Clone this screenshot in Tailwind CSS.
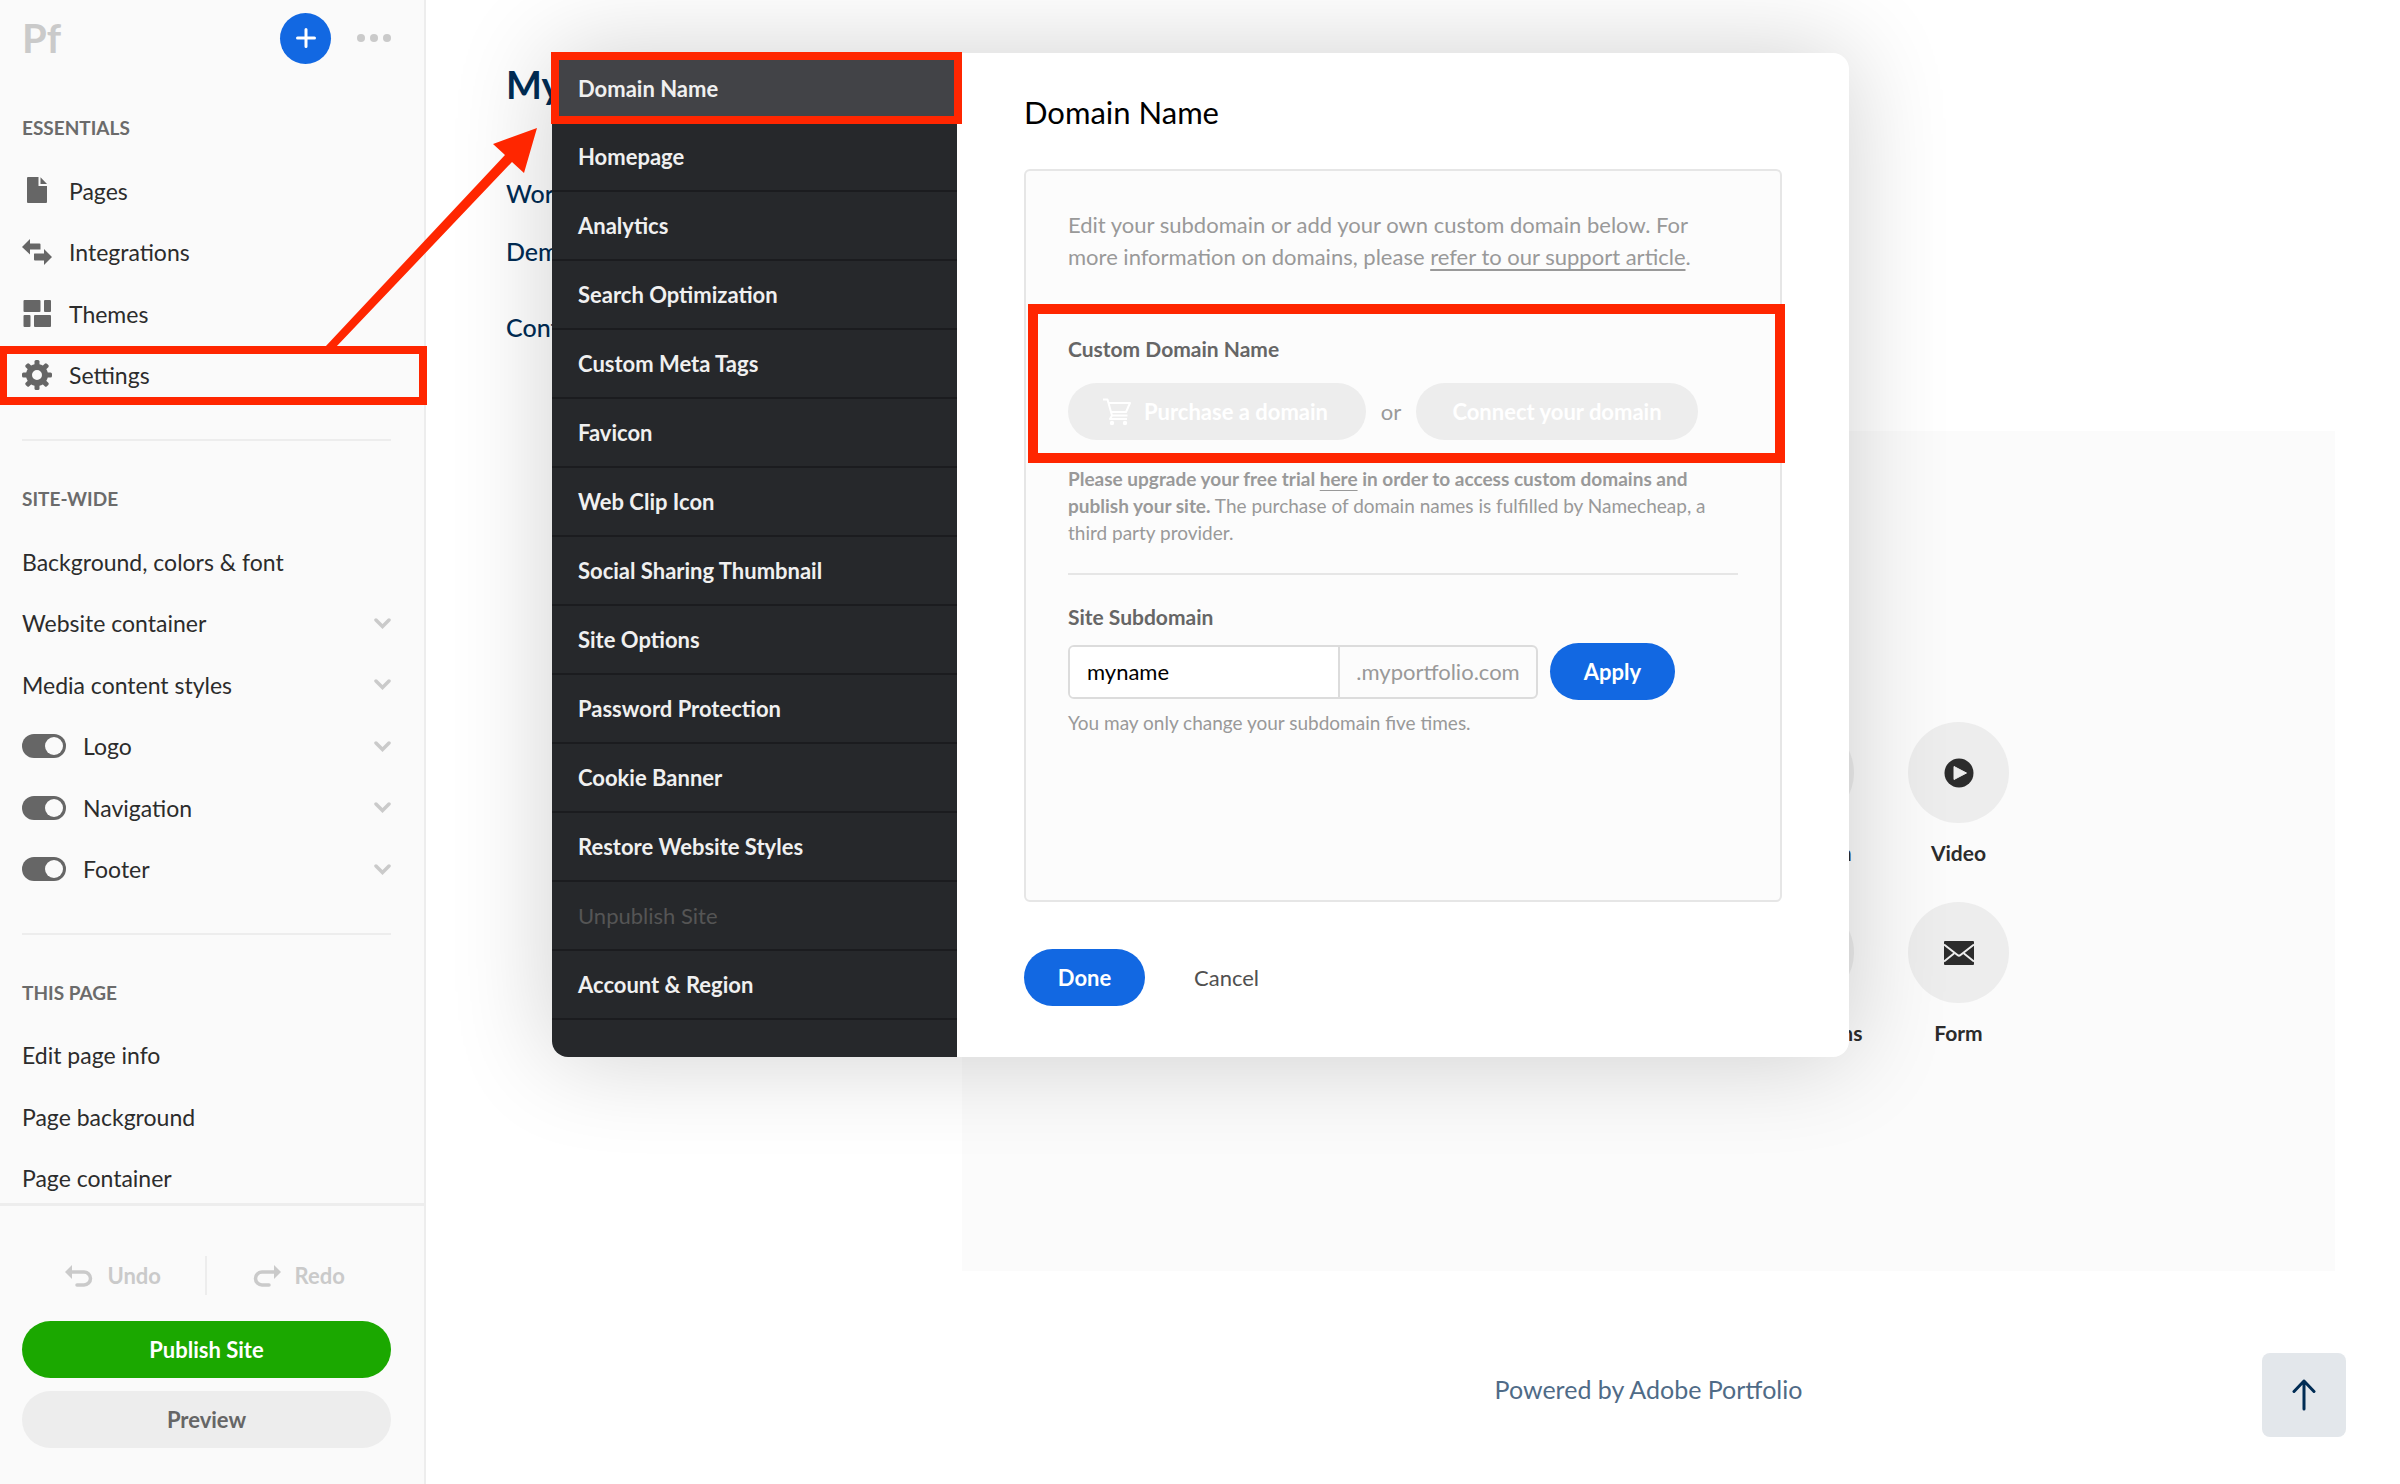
<!DOCTYPE html>
<html lang="en">
<head>
    <meta charset="UTF-8" />
    <meta name="viewport" content="width=device-width, initial-scale=1.0" />
    <script src="https://cdn.jsdelivr.net/npm/@tailwindcss/browser@4"></script>
    <title>Portfolio Settings</title>
</head>
<body class="relative flex h-screen overflow-hidden bg-white font-['Lato','Noto_Sans',sans-serif] text-[23px] text-[#2c2c2c]">

    <!-- Sidebar -->
    <aside class="flex w-[426px] shrink-0 flex-col border-r-2 border-[#ededed] bg-[#fafafa]">
        <div class="min-h-0 flex-1 overflow-hidden pl-[22px] pr-[33px]">
            <header class="flex h-[70px] items-center pt-[6px]">
                <span class="text-[40px] font-bold leading-none text-[#cacaca]">Pf</span>
                <button aria-label="Add" class="ml-auto flex size-[51px] items-center justify-center rounded-full bg-[#1268e2]">
                    <svg class="size-5" viewBox="0 0 20 20" fill="none" stroke="#fff" stroke-width="3" stroke-linecap="round"><path d="M10 1.500v17M1.500 10h17" /></svg>
                </button>
                <button aria-label="More" class="ml-[26px]">
                    <svg class="h-2 w-[34px]" viewBox="0 0 34 8" fill="#cacaca"><circle cx="4" cy="4" r="4" /><circle cx="17" cy="4" r="4" /><circle cx="30" cy="4" r="4" /></svg>
                </button>
            </header>

            <section class="border-b-2 border-[#ededed] pb-[33px] pt-[42px]">
                <h2 class="mb-4 text-[19px] font-bold leading-8 text-[#6b6b6b]">ESSENTIALS</h2>
                <nav class="grid h-[246px] grid-rows-4">
                    <a href="#" class="flex items-center gap-[17px]">
                        <svg class="size-[30px]" viewBox="0 0 30 30" fill="#666"><path d="M6 1h10.500v9H25v16a1 1 0 0 1-1 1H6a1 1 0 0 1-1-1V2a1 1 0 0 1 1-1zM18.500 1.200l6.500 6.800h-6.500z" /></svg>
                        Pages
                    </a>
                    <a href="#" class="flex items-center gap-[17px]">
                        <svg class="size-[30px]" viewBox="0 0 30 30" fill="#666"><path d="M0 10l8-8v4.500h9.500a1 1 0 0 1 1 1v5h-10.500v5zM30 20l-8-8v4.500h-9.500a.5.5 0 0 0-.5.5v5.500a1 1 0 0 0 1 1h9v4.500z" /></svg>
                        Integrations
                    </a>
                    <a href="#" class="flex items-center gap-[17px]">
                        <svg class="size-[30px]" viewBox="0 0 30 30" fill="#666"><rect x="1.500" y="1" width="17" height="12" rx="1" /><rect x="22" y="1" width="7" height="12" rx="1" /><rect x="1.500" y="16" width="7" height="12" rx="1" /><rect x="12" y="16" width="17" height="12" rx="1" /></svg>
                        Themes
                    </a>
                    <a href="#" class="flex items-center gap-[17px]">
                        <svg class="size-[30px]" viewBox="0 0 30 30" fill="#666">
                            <path fill-rule="evenodd" d="M15 4a11 11 0 1 0 0 22a11 11 0 0 0 0-22zM15 10a5 5 0 1 1 0 10a5 5 0 0 1 0-10z" />
                            <g id="tooth"><rect x="12.500" y="0" width="5" height="6" rx="1.500" /><rect x="12.500" y="24" width="5" height="6" rx="1.500" /></g>
                            <use href="#tooth" transform="rotate(45 15 15)" /><use href="#tooth" transform="rotate(90 15 15)" /><use href="#tooth" transform="rotate(135 15 15)" />
                        </svg>
                        Settings
                    </a>
                </nav>
            </section>

            <section class="border-b-2 border-[#ededed] pb-[33px] pt-[42px]">
                <h2 class="mb-4 text-[19px] font-bold leading-8 text-[#6b6b6b]">SITE-WIDE</h2>
                <div class="grid h-[369px] grid-rows-6">
                    <a href="#" class="flex items-center">Background, colors &amp; font</a>
                    <a href="#" class="flex items-center justify-between">Website container
                        <svg class="h-[11px] w-[17px]" viewBox="0 0 17 11" fill="none" stroke="#cacaca" stroke-width="3.500" stroke-linecap="round"><path d="M2 2l6.500 6.500L15 2" /></svg>
                    </a>
                    <a href="#" class="flex items-center justify-between">Media content styles
                        <svg class="h-[11px] w-[17px]" viewBox="0 0 17 11" fill="none" stroke="#cacaca" stroke-width="3.500" stroke-linecap="round"><path d="M2 2l6.500 6.500L15 2" /></svg>
                    </a>
                    <div class="flex items-center justify-between">
                        <label class="flex items-center gap-[17px]">
                            <input type="checkbox" checked class="flex h-6 w-11 appearance-none items-center justify-end rounded-full bg-[#666] px-[3px] before:size-[18px] before:rounded-full before:bg-[#fafafa]" />Logo
                        </label>
                        <svg class="h-[11px] w-[17px]" viewBox="0 0 17 11" fill="none" stroke="#cacaca" stroke-width="3.500" stroke-linecap="round"><path d="M2 2l6.500 6.500L15 2" /></svg>
                    </div>
                    <div class="flex items-center justify-between">
                        <label class="flex items-center gap-[17px]">
                            <input type="checkbox" checked class="flex h-6 w-11 appearance-none items-center justify-end rounded-full bg-[#666] px-[3px] before:size-[18px] before:rounded-full before:bg-[#fafafa]" />Navigation
                        </label>
                        <svg class="h-[11px] w-[17px]" viewBox="0 0 17 11" fill="none" stroke="#cacaca" stroke-width="3.500" stroke-linecap="round"><path d="M2 2l6.500 6.500L15 2" /></svg>
                    </div>
                    <div class="flex items-center justify-between">
                        <label class="flex items-center gap-[17px]">
                            <input type="checkbox" checked class="flex h-6 w-11 appearance-none items-center justify-end rounded-full bg-[#666] px-[3px] before:size-[18px] before:rounded-full before:bg-[#fafafa]" />Footer
                        </label>
                        <svg class="h-[11px] w-[17px]" viewBox="0 0 17 11" fill="none" stroke="#cacaca" stroke-width="3.500" stroke-linecap="round"><path d="M2 2l6.500 6.500L15 2" /></svg>
                    </div>
                </div>
            </section>

            <section class="pt-[42px]">
                <h2 class="mb-4 text-[19px] font-bold leading-8 text-[#6b6b6b]">THIS PAGE</h2>
                <nav class="grid h-[184px] grid-rows-3">
                    <a href="#" class="flex items-center">Edit page info</a>
                    <a href="#" class="flex items-center">Page background</a>
                    <a href="#" class="flex items-center">Page container</a>
                </nav>
            </section>
        </div>

        <footer class="shrink-0 border-t-3 border-[#ededed] pb-9 pl-[22px] pr-[33px] pt-[50px] text-[22px] font-bold">
            <div class="mb-[26px] grid h-[39px] grid-cols-2 text-[#cacaca]">
                <button disabled class="flex items-center justify-center gap-[14px] border-r-2 border-[#ededed]">
                    <svg class="h-[22px] w-7" viewBox="0 0 28 22" fill="none" stroke="#cacaca" stroke-width="3.500"><path d="M6 7h13a6.500 6.500 0 0 1 0 13h-7" stroke-linecap="round" /><path d="M0 7l7-7v14z" fill="#cacaca" stroke="none" /></svg>
                    Undo
                </button>
                <button disabled class="flex items-center justify-center gap-[14px]">
                    <svg class="h-[22px] w-7" viewBox="0 0 28 22" fill="none" stroke="#cacaca" stroke-width="3.500"><path d="M22 7H9a6.500 6.500 0 0 0 0 13h7" stroke-linecap="round" /><path d="M28 7l-7-7v14z" fill="#cacaca" stroke="none" /></svg>
                    Redo
                </button>
            </div>
            <button class="mb-[13px] h-[57px] w-full rounded-full bg-[#1ba800] text-white">Publish Site</button>
            <button class="h-[57px] w-full rounded-full bg-[#ededed] text-[#666]">Preview</button>
        </footer>
    </aside>

    <!-- Site being edited -->
    <main class="relative flex flex-1 flex-col overflow-hidden">
        <div class="flex flex-1">
            <div class="w-[536px] shrink-0 pl-20 pt-[60px] text-[#002c54]">
                <h1 class="text-[38px] font-bold leading-[48px]">My</h1>
                <nav class="flex flex-col pt-[66px] text-[25px] font-medium leading-[38px]">
                    <a href="#">Work</a>
                    <a href="#" class="mt-5">Demo</a>
                    <a href="#" class="mt-[38px]">Contact</a>
                </nav>
            </div>
            <div class="mr-[65px] mt-[431px] h-[840px] flex-1 bg-[#fbfbfb] pt-[291px]">
                <div class="mx-auto grid w-[775px] grid-cols-5 gap-y-[35px] text-center text-[21px] font-bold leading-7">
                    <div class="col-start-4 flex flex-col items-center gap-4"><span class="size-[101px] rounded-full bg-[#ededed]"></span>Lightroom</div>
                    <div class="flex flex-col items-center gap-4">
                        <span class="flex size-[101px] items-center justify-center rounded-full bg-[#ededed]">
                            <svg class="size-[30px]" viewBox="0 0 30 30"><circle cx="15" cy="15" r="14.500" fill="#2c2c2c" /><path d="M10 8.500v13L22.500 15z" fill="#ededed" stroke="#ededed" stroke-linejoin="round" /></svg>
                        </span>
                        Video
                    </div>
                    <div class="col-start-4 flex flex-col items-center gap-4"><span class="size-[101px] rounded-full bg-[#ededed]"></span>Link Buttons</div>
                    <div class="flex flex-col items-center gap-4">
                        <span class="flex size-[101px] items-center justify-center rounded-full bg-[#ededed]">
                            <svg class="h-6 w-[30px]" viewBox="0 0 30 24"><rect width="30" height="24" rx="1" fill="#2c2c2c" /><path d="M0 3.500l13.500 10.500q1.500 1.200 3 0L30 3.500M0 20.500l10-8M30 20.500l-10-8" fill="none" stroke="#ededed" stroke-width="2" /></svg>
                        </span>
                        Form
                    </div>
                </div>
            </div>
        </div>
        <footer class="ml-[536px] mr-[65px] flex h-[213px] shrink-0 justify-center pt-[102px] text-[25px] leading-8 text-[#4f6b87]">
            <a href="#" class="h-8">Powered by Adobe Portfolio</a>
        </footer>
        <button aria-label="Back to top" class="absolute bottom-[47px] right-[54px] flex size-[84px] items-center justify-center rounded-lg bg-[#e3e7eb]">
            <svg class="h-8 w-6" viewBox="0 0 24 32" fill="none" stroke="#002c54" stroke-width="3" stroke-linecap="round" stroke-linejoin="round"><path d="M12 30V2M2 12.500L12 2l10 10.500" /></svg>
        </button>

        <!-- Settings dialog -->
        <div role="dialog" aria-labelledby="dialog-title" class="absolute left-[126px] top-[53px] flex w-[1297px] rounded-2xl bg-white shadow-[0_0_100px_rgba(0,0,0,0.19)]">
            <nav class="flex w-[405px] flex-col rounded-l-2xl bg-[#26282b] pb-[37px] text-[22px] font-bold text-[#f0f0f0]">
                <a href="#" class="relative flex h-[70px] items-center rounded-tl-2xl bg-[#424347] px-[26px]">
                    <span class="absolute -inset-y-px -left-px -right-[5px] border-8 border-[#ff2600]"></span>
                    Domain Name
                </a>
                <a href="#" class="flex h-[69px] items-center border-b-2 border-[#1b1c1f] px-[26px]">Homepage</a>
                <a href="#" class="flex h-[69px] items-center border-b-2 border-[#1b1c1f] px-[26px]">Analytics</a>
                <a href="#" class="flex h-[69px] items-center border-b-2 border-[#1b1c1f] px-[26px]">Search Optimization</a>
                <a href="#" class="flex h-[69px] items-center border-b-2 border-[#1b1c1f] px-[26px]">Custom Meta Tags</a>
                <a href="#" class="flex h-[69px] items-center border-b-2 border-[#1b1c1f] px-[26px]">Favicon</a>
                <a href="#" class="flex h-[69px] items-center border-b-2 border-[#1b1c1f] px-[26px]">Web Clip Icon</a>
                <a href="#" class="flex h-[69px] items-center border-b-2 border-[#1b1c1f] px-[26px]">Social Sharing Thumbnail</a>
                <a href="#" class="flex h-[69px] items-center border-b-2 border-[#1b1c1f] px-[26px]">Site Options</a>
                <a href="#" class="flex h-[69px] items-center border-b-2 border-[#1b1c1f] px-[26px]">Password Protection</a>
                <a href="#" class="flex h-[69px] items-center border-b-2 border-[#1b1c1f] px-[26px]">Cookie Banner</a>
                <a href="#" class="flex h-[69px] items-center border-b-2 border-[#1b1c1f] px-[26px]">Restore Website Styles</a>
                <a href="#" class="flex h-[69px] items-center border-b-2 border-[#1b1c1f] px-[26px] font-normal text-[#555]">Unpublish Site</a>
                <a href="#" class="flex h-[69px] items-center border-b-2 border-[#1b1c1f] px-[26px]">Account &amp; Region</a>
            </nav>

            <div class="flex flex-1 flex-col px-[67px] pb-[51px] pt-[39px]">
                <h2 id="dialog-title" class="text-[31px] leading-10 text-black">Domain Name</h2>
                <div class="mt-[37px] flex-1 rounded-md border-2 border-[#e6e6e6] bg-[#fcfcfc] px-[42px] pt-[38px] text-[#999]">
                    <p class="text-[22px] leading-8">Edit your subdomain or add your own custom domain below. For<br />more information on domains, please <a href="#" class="underline underline-offset-4">refer to our support article</a>.</p>

                    <div class="relative mt-[60px]">
                        <span class="absolute -left-10 -right-[47px] -top-[29px] h-[159px] border-10 border-[#ff2600]"></span>
                        <h3 class="text-[21px] font-bold leading-8 text-[#666]">Custom Domain Name</h3>
                        <div class="mt-[18px] flex items-center text-[22px]">
                            <button disabled class="flex h-[57px] w-[298px] items-center justify-center gap-3 rounded-full bg-[#ededed] pr-1 font-bold text-white">
                                <svg class="h-7 w-[30px]" viewBox="0 0 30 28" fill="none" stroke="#fff" stroke-width="2"><path d="M1 1.500h4.500l4.500 16H25.500M6.500 5H28l-4 9H9M10 17.500l-2 3.500h17" stroke-linejoin="round" /><circle cx="10" cy="25" r="2.200" fill="#fff" stroke="none" /><circle cx="23" cy="25" r="2.200" fill="#fff" stroke="none" /></svg>
                                Purchase a domain
                            </button>
                            <span class="w-[50px] text-center">or</span>
                            <button disabled class="h-[57px] w-[282px] rounded-full bg-[#ededed] font-bold text-white">Connect your domain</button>
                        </div>
                    </div>

                    <p class="mt-[25px] text-[19px] leading-[27px]"><strong>Please upgrade your free trial <a href="#" class="underline underline-offset-4">here</a> in order to access custom domains and<br />publish your site.</strong> The purchase of domain names is fulfilled by Namecheap, a<br />third party provider.</p>

                    <hr class="mt-[27px] border-t-2 border-[#e6e6e6]" />

                    <label for="subdomain" class="mt-[26px] block text-[21px] font-bold leading-8 text-[#666]">Site Subdomain</label>
                    <div class="mt-[10px] flex items-center">
                        <div class="flex h-[54px] w-[470px] overflow-hidden rounded-md border-2 border-[#dcdcdc]">
                            <input id="subdomain" type="text" value="myname" class="w-[270px] border-r-2 border-[#dcdcdc] bg-white px-[17px] text-[22px] text-black outline-none" />
                            <span class="flex flex-1 items-center justify-center text-[22px]">.myportfolio.com</span>
                        </div>
                        <button class="ml-3 h-[57px] w-[125px] rounded-full bg-[#1268e2] text-[22px] font-bold text-white">Apply</button>
                    </div>
                    <p class="mt-[9px] text-[19px] leading-[27px]">You may only change your subdomain five times.</p>
                </div>
                <div class="mt-[47px] flex items-center gap-[49px]">
                    <button class="h-[57px] w-[121px] rounded-full bg-[#1268e2] text-[22px] font-bold text-white">Done</button>
                    <button class="text-[22px] text-[#505050]">Cancel</button>
                </div>
            </div>
        </div>
    </main>

    <!-- Callout around Settings, with the arrow to Domain Name -->
    <svg class="pointer-events-none absolute left-0 top-[120px] h-[290px] w-[540px]" viewBox="0 120 540 290" fill="#ff2600">
        <rect x="3" y="350" width="420" height="51" fill="none" stroke="#ff2600" stroke-width="8" />
        <path d="M325 347L336 347L512 162L524 173L537 128L493 144L505 155z" />
    </svg>
</body>
</html>
